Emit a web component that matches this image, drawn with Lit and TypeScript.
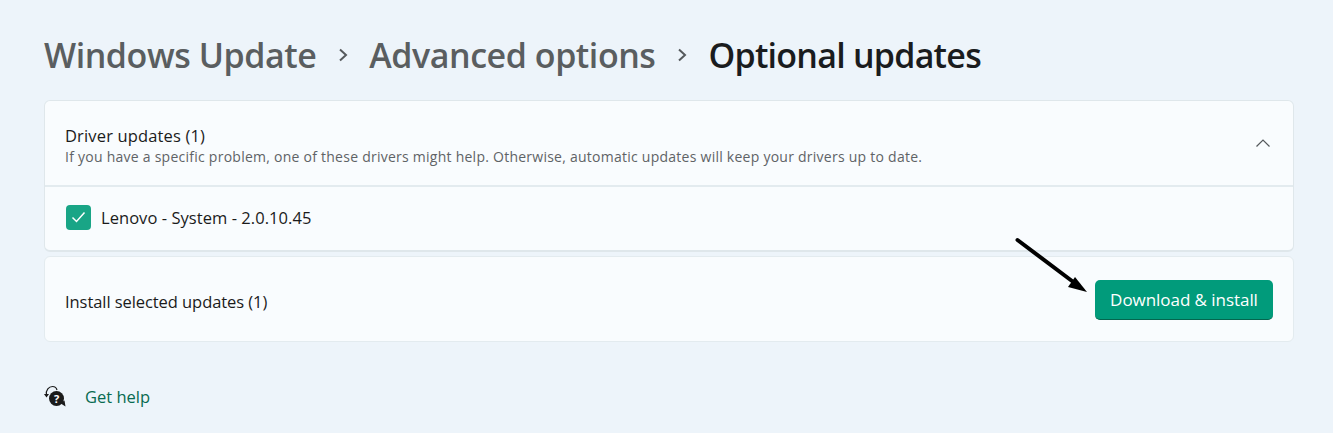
import {LitElement, html, css} from 'lit';
import {customElement} from 'lit/decorators.js';

@customElement('app-root')
export class AppRoot extends LitElement {
    static styles = css`
        :host {
            display: block;
            position: relative;
            height: 433px;
            overflow: hidden;
            background: #edf4fa;
            font-family: "Open Sans", "Noto Sans", sans-serif;
            color: #1b1b1b;
        }

        .page {
            padding: 31px 39px 0 44px;
            display: flex;
            flex-direction: column;
        }

        .crumbs {
            display: flex;
            align-items: center;
            height: 48px;
            font-size: 34px;
            font-weight: 600;
            letter-spacing: -0.45px;
            color: #5a5e60;
            white-space: nowrap;
        }

        .crumbs .sep {
            width: 12px;
            height: 14px;
            margin: 0 20.5px;
            flex: none;
        }

        .crumbs .current {
            color: #1a1c1e;
            letter-spacing: -0.75px;
        }

        .panel {
            margin-top: 21px;
            display: flex;
            flex-direction: column;
            background: #f9fcfe;
            border: 1px solid #dfe7eb;
            border-bottom: 2px solid #dfe7eb;
            border-radius: 6px;
        }

        .head {
            height: 86px;
            box-sizing: border-box;
            padding: 0 22px 0 20px;
            display: flex;
            align-items: center;
            justify-content: space-between;
            border-bottom: 2px solid #e3ebef;
        }

        .head-text {
            margin-top: 5px;
        }

        .title {
            font-size: 16.5px;
            line-height: 21px;
            letter-spacing: 0.15px;
        }

        .sub {
            font-size: 14px;
            line-height: 21px;
            letter-spacing: 0.25px;
            color: #5f6366;
        }

        .chev {
            width: 16px;
            height: 10px;
        }

        .row {
            height: 63px;
            box-sizing: border-box;
            padding: 0 0 3px 21px;
            display: flex;
            align-items: center;
            gap: 10px;
            font-size: 16.5px;
            letter-spacing: 0.05px;
        }

        .check {
            width: 25px;
            height: 25px;
            border-radius: 4px;
            background: #19a586;
            display: flex;
            align-items: center;
            justify-content: center;
        }

        .install {
            margin-top: 4px;
            height: 86px;
            box-sizing: border-box;
            padding: 0 20px;
            display: flex;
            align-items: center;
            justify-content: space-between;
            background: #f9fcfe;
            border: 1px solid #e3ebef;
            border-radius: 6px;
            font-size: 16.5px;
            letter-spacing: -0.07px;
        }

        .install-label {
            margin-top: 5px;
        }

        .btn {
            width: 178px;
            height: 40px;
            margin-top: 1px;
            padding: 1px 0 0;
            border: none;
            border-bottom: 1px solid #04664f;
            border-radius: 5px;
            background: #019b7b;
            color: #fff;
            font: inherit;
            font-size: 17px;
            letter-spacing: -0.05px;
        }

        .help {
            margin-top: 41px;
            display: flex;
            align-items: center;
            gap: 18px;
            height: 27px;
            font-size: 16.5px;
            color: #086b50;
        }

        .arrow {
            position: absolute;
            left: 1010px;
            top: 232px;
            width: 85px;
            height: 65px;
        }
    `;

    render() {
        const sep = html`<svg class="sep" viewBox="0 0 12 14"><path d="M3 1.5 9 7 3 12.5" fill="none" stroke="#55595c" stroke-width="2"/></svg>`;
        return html`
            <div class="page">
                <div class="crumbs">
                    <span>Windows Update</span>${sep}<span>Advanced options</span>${sep}<span class="current">Optional updates</span>
                </div>
                <div class="panel">
                    <div class="head">
                        <div class="head-text">
                            <div class="title">Driver updates (1)</div>
                            <div class="sub">If you have a specific problem, one of these drivers might help. Otherwise, automatic updates will keep your drivers up to date.</div>
                        </div>
                        <svg class="chev" viewBox="0 0 16 10"><path d="M1.5 8.5 8 2l6.500 6.500" fill="none" stroke="#55595c" stroke-width="1.200"/></svg>
                    </div>
                    <div class="row">
                        <span class="check"><svg width="15" height="12" viewBox="0 0 15 12"><path d="M1.500 6.500 5.500 10.500 13.500 1.500" fill="none" stroke="#fff" stroke-width="1.500"/></svg></span>
                        <span>Lenovo - System - 2.0.10.45</span>
                    </div>
                </div>
                <div class="install">
                    <span class="install-label">Install selected updates (1)</span>
                    <button class="btn">Download &amp; install</button>
                </div>
                <div class="help">
                    <svg width="23" height="23" viewBox="0 0 23 23">
                        <path d="M2.500 10C1.500 5 5 1.500 8.500 1.500c2.500 0 4 1.500 4.500 3.500" fill="none" stroke="#1b1b1b" stroke-width="1.200"/>
                        <path d="M0 9h5L2.500 12.500z" fill="#1b1b1b"/>
                        <circle cx="12.500" cy="13.500" r="7.500" fill="#1b1b1b"/>
                        <path d="M16 18l5.500 3.500-1-6z" fill="#1b1b1b"/>
                        <text x="12.500" y="17.500" text-anchor="middle" font-size="11" font-weight="700" fill="#fff" font-family="Open Sans">?</text>
                    </svg>
                    <span>Get help</span>
                </div>
            </div>
            <svg class="arrow" viewBox="0 0 85 65">
                <path d="M7.500 8 66 52" stroke="#000" stroke-width="4" stroke-linecap="round"/>
                <path d="M77 60 58 55 65 45z" fill="#000"/>
            </svg>
        `;
    }
}
